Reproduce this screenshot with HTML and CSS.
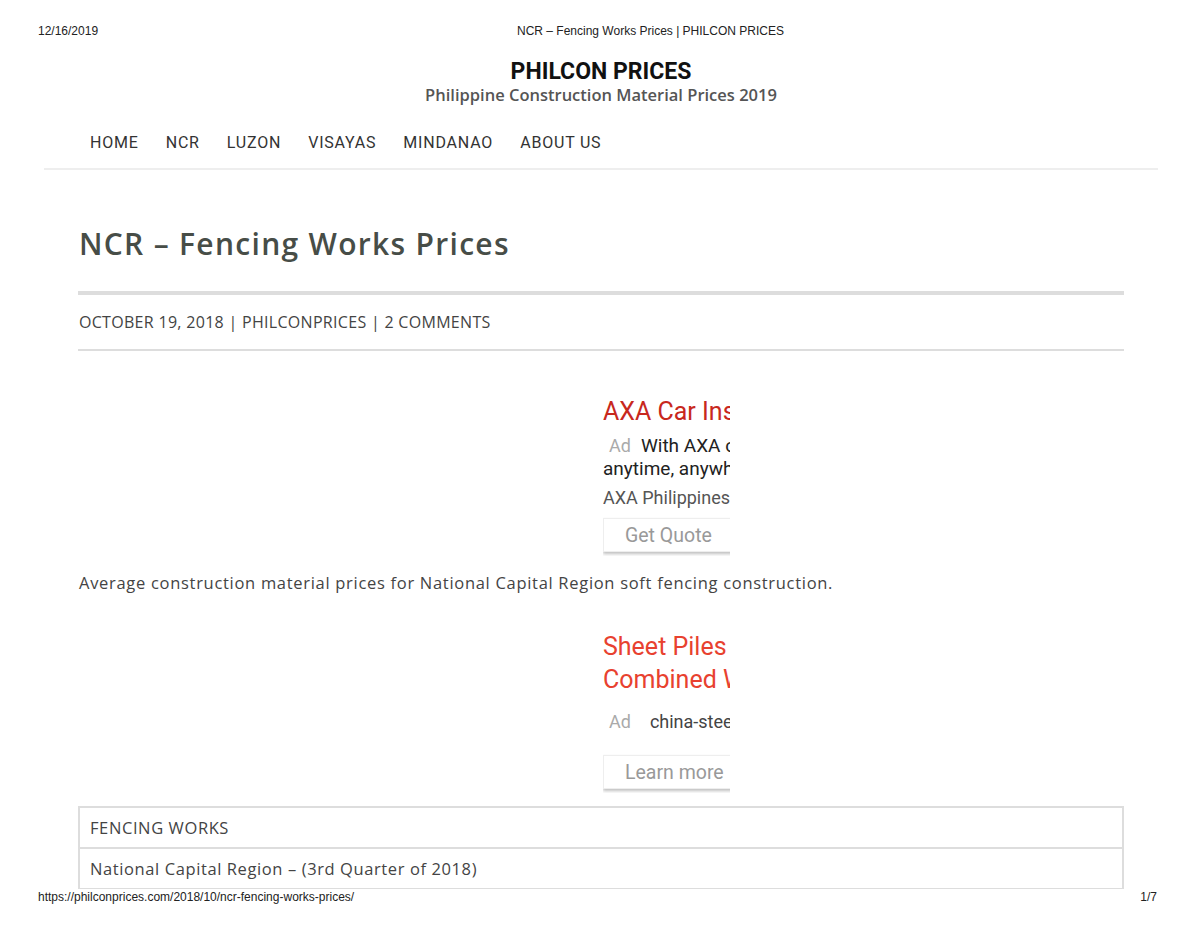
FILE: index.html
```html
<!DOCTYPE html>
<html lang="en">
<head>
<meta charset="utf-8">
<title>NCR – Fencing Works Prices | PHILCON PRICES</title>
<link rel="stylesheet" href="styles.css">
</head>
<body>
<div class="print-head">
  <span class="print-date">12/16/2019</span>
  <span class="print-title">NCR – Fencing Works Prices | PHILCON PRICES</span>
</div>

<header class="site-header">
  <div class="branding">
    <div class="site-title">PHILCON PRICES</div>
    <div class="site-desc">Philippine Construction Material Prices 2019</div>
  </div>
  <nav class="main-nav">
    <a>HOME</a><a>NCR</a><a>LUZON</a><a>VISAYAS</a><a>MINDANAO</a><a>ABOUT US</a>
  </nav>
</header>

<main class="content">
  <h1 class="entry-title">NCR – Fencing Works Prices</h1>
  <div class="entry-meta">OCTOBER 19, 2018 | PHILCONPRICES | 2 COMMENTS</div>

  <div class="ad-wrap">
    <div class="ad">
      <div class="ad-title ad-title-dark">AXA Car Insurance</div>
      <div class="ad-body"><span class="ad-label">Ad</span>With AXA car insurance, you're covered<br>anytime, anywhere</div>
      <div class="ad-source">AXA Philippines</div>
      <div class="ad-btn">Get Quote</div>
    </div>
  </div>

  <p class="intro">Average construction material prices for National Capital Region soft fencing construction.</p>

  <div class="ad-wrap ad-wrap-2">
    <div class="ad">
      <div class="ad-title">Sheet Piles<br>Combined Wall</div>
      <div class="ad-line"><span class="ad-label ad-label-2">Ad</span><span class="ad-site">china-steel.com</span></div>
      <div class="ad-btn">Learn more</div>
    </div>
  </div>

  <table class="price-table">
    <tr><td>FENCING WORKS</td></tr>
    <tr><td>National Capital Region – (3rd Quarter of 2018)</td></tr>
  </table>
</main>

<div class="print-foot">
  <span>https://philconprices.com/2018/10/ncr-fencing-works-prices/</span>
  <span>1/7</span>
</div>
</body>
</html>
```

FILE: styles.css
```css
html, body {
  margin: 0;
  padding: 0;
  background: #fff;
}
body {
  width: 1200px;
  height: 927px;
  overflow: hidden;
  position: relative;
  font-family: "Open Sans", sans-serif;
  color: #444;
}

.print-head {
  display: flex;
  height: 20px;
  padding: 24px 38px 0;
  font-family: "Liberation Sans", Arial, sans-serif;
  font-size: 12px;
  color: #222;
}
.print-date { width: 479px; }

.site-header {
  margin: 0 42px 0 44px;
  border-bottom: 2px solid #eee;
}
.branding {
  text-align: center;
  padding-top: 16px;
}
.site-title {
  font-family: Roboto, sans-serif;
  font-weight: 700;
  font-size: 23px;
  color: #111;
  line-height: 24px;
}
.site-desc {
  font-family: "Open Sans", sans-serif;
  font-weight: 600;
  font-size: 16.5px;
  color: #555;
  line-height: 22px;
}
.main-nav {
  display: flex;
  gap: 27px;
  padding: 27px 0 0 46px;
  height: 35px;
  box-sizing: content-box;
}
.main-nav a {
  font-family: Roboto, sans-serif;
  font-size: 16px;
  letter-spacing: 0.8px;
  color: #333;
  line-height: 20px;
}

.content {
  margin: 0 76px 0 78px;
}
.entry-title {
  margin: 0;
  padding: 56px 0 0 1px;
  font-family: "Open Sans", sans-serif;
  font-weight: 600;
  font-size: 30px;
  letter-spacing: 1.3px;
  line-height: 36px;
  color: #474d47;
  height: 65px;
  box-sizing: content-box;
  border-bottom: 4px solid #ddd;
}
.entry-meta {
  font-size: 16px;
  letter-spacing: 0.3px;
  color: #444;
  line-height: 20px;
  padding: 17px 0 17px 1px;
  border-bottom: 2px solid #ddd;
}

.ad-wrap {
  padding: 44px 0 0 525px;
}
.ad {
  width: 127px;
  overflow: hidden;
  white-space: nowrap;
  font-family: Roboto, sans-serif;
}
.ad-title {
  font-size: 25px;
  line-height: 33px;
  color: #e8412f;
}
.ad-title-dark { color: #c8281d; }
.ad-body {
  font-size: 19px;
  line-height: 23px;
  color: #222;
  margin-top: 6px;
}
.ad-label {
  color: #aaa;
  font-size: 18px;
  margin: 0 10px 0 6px;
}
.ad-label-2 { margin-right: 19px; }
.ad-source {
  font-size: 18px;
  color: #555;
  line-height: 22px;
  margin-top: 7px;
}
.ad-btn {
  margin-top: 9px;
  width: 160px;
  height: 34px;
  line-height: 34px;
  box-sizing: border-box;
  border: 1px solid #eee;
  box-shadow: 0 2px 3px rgba(0,0,0,0.25);
  font-size: 19.5px;
  color: #999;
  padding-left: 21px;
  margin-bottom: 4px;
}
.ad-line {
  font-size: 18px;
  line-height: 22px;
  margin-top: 15px;
  color: #444;
}
.ad-site { color: #444; }
.ad-wrap-2 { padding-top: 36px; }
.ad-wrap-2 .ad-btn { margin-top: 22px; }

.intro {
  margin: 16px 0 0 1px;
  font-size: 16.5px;
  letter-spacing: 0.7px;
  line-height: 22px;
  color: #444;
}

.price-table {
  width: 100%;
  border-collapse: collapse;
  margin-top: 13px;
}
.price-table td {
  border: 2px solid #ddd;
  padding: 9px 10px;
  font-size: 16.5px;
  letter-spacing: 0.6px;
  line-height: 21px;
  color: #444;
}

.print-foot {
  position: absolute;
  left: 38px;
  right: 43px;
  top: 889px;
  height: 20px;
  display: flex;
  justify-content: space-between;
  background: #fff;
  font-family: "Liberation Sans", Arial, sans-serif;
  font-size: 12px;
  color: #222;
  padding-top: 1px;
}
```
